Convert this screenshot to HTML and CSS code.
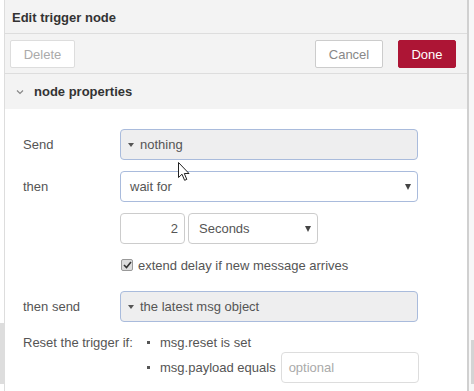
FILE: index.html
```html
<!DOCTYPE html>
<html lang="en">
<head>
    <meta charset="UTF-8">
    <title>Edit trigger node</title>
    <link rel="stylesheet" href="styles.css">
</head>
<body>
    <div class="frame">
        <div class="gutter gutter-left"><div class="thumb"></div></div>

        <div class="tray">
            <div class="tray-header">Edit trigger node</div>

            <div class="tray-toolbar">
                <button class="btn btn-delete" disabled>Delete</button>
                <span class="spacer"></span>
                <button class="btn btn-cancel">Cancel</button>
                <button class="btn btn-primary">Done</button>
            </div>

            <div class="section-head">
                <svg class="chevron" width="8" height="6" viewBox="0 0 8 6"><path d="M1 1.5 L4 4.5 L7 1.5" fill="none" stroke="#888" stroke-width="1.2"/></svg>
                <span>node properties</span>
            </div>

            <div class="form">
                <div class="row">
                    <label class="label">Send</label>
                    <div class="field typed">
                        <span class="caret-left"></span>
                        <span>nothing</span>
                    </div>
                </div>

                <div class="row">
                    <label class="label">then</label>
                    <div class="field select focus">
                        <span>wait for</span>
                        <span class="caret"></span>
                    </div>
                </div>

                <div class="row row-indent">
                    <div class="field number">2</div>
                    <div class="field select units">
                        <span>Seconds</span>
                        <span class="caret"></span>
                    </div>
                </div>

                <div class="check-row">
                    <span class="checkbox">
                        <svg width="9" height="8" viewBox="0 0 9 8"><path d="M1 4 L3.5 6.5 L8 1" fill="none" stroke="#333" stroke-width="1.6"/></svg>
                    </span>
                    <span>extend delay if new message arrives</span>
                </div>

                <div class="row">
                    <label class="label">then send</label>
                    <div class="field typed">
                        <span class="caret-left"></span>
                        <span>the latest msg object</span>
                    </div>
                </div>

                <div class="reset">
                    <div class="reset-label">Reset the trigger if:</div>
                    <ul class="reset-list">
                        <li class="reset-item">msg.reset is set</li>
                        <li class="reset-item reset-payload">
                            <span>msg.payload equals</span>
                            <span class="field optional">optional</span>
                        </li>
                    </ul>
                </div>
            </div>

            <svg class="cursor" width="13" height="20" viewBox="0 0 13 20">
                <path d="M0.5 0.5 L0.5 15.5 L4 12.2 L6.6 18.3 L8.8 17.4 L6.3 11.5 L11 11.5 Z" fill="#fff" stroke="#222" stroke-width="1"/>
            </svg>
        </div>

        <div class="gutter gutter-right"><div class="thumb"></div></div>
    </div>
</body>
</html>
```

FILE: styles.css
```css
body {
    margin: 0;
    font-family: "Liberation Sans", Arial, sans-serif;
    font-size: 13px;
    color: #555;
    background: #fff;
}
.frame {
    display: flex;
    height: 391px;
    overflow: hidden;
}
.gutter {
    display: flex;
    flex-direction: column;
}
.gutter-left {
    width: 4px;
    background: #fff;
    padding-top: 323px;
}
.gutter-left .thumb {
    width: 4px;
    height: 61px;
    background: #ddd;
}
.gutter-right {
    width: 5px;
    background: #f7f7f7;
    padding-top: 340px;
    align-items: flex-end;
}
.gutter-right .thumb {
    width: 3px;
    height: 44px;
    background: #d4d4d4;
}
.tray {
    position: relative;
    width: 462px;
    border-left: 1px solid #ddd;
    border-right: 2px solid #d0d0d0;
    background: #fff;
}
.tray-header {
    height: 33px;
    line-height: 35px;
    padding-left: 7px;
    background: #f3f3f3;
    border-bottom: 1px solid #ddd;
    font-weight: bold;
    color: #333;
}
.tray-toolbar {
    display: flex;
    align-items: flex-start;
    height: 33px;
    padding: 6px 11px 0 5px;
    background: #f3f3f3;
    border-bottom: 1px solid #ddd;
}
.spacer {
    flex: 1;
}
.btn {
    height: 28px;
    padding: 0;
    font-family: inherit;
    font-size: 13px;
    color: #888;
    background: #fff;
    border: 1px solid #ccc;
    border-radius: 2px;
}
.btn[disabled] {
    color: #aaa;
    border-color: #ddd;
}
.btn-delete {
    width: 65px;
}
.btn-cancel {
    width: 68px;
    margin-right: 15px;
}
.btn-primary {
    width: 58px;
    color: #fff;
    background: #ad1535;
    border-color: #ad1535;
}
.section-head {
    display: flex;
    align-items: center;
    height: 35px;
    padding-left: 11px;
    background: #f3f3f3;
    font-weight: bold;
    color: #333;
}
.chevron {
    margin-right: 10px;
}
.form {
    padding: 20px 0 0 18px;
}
.row {
    display: flex;
    align-items: center;
    margin-bottom: 11px;
}
.row-indent {
    padding-left: 97px;
}
.label {
    width: 97px;
    flex: none;
}
.field {
    box-sizing: border-box;
    display: flex;
    align-items: center;
    height: 31px;
    border: 1px solid #ccc;
    border-radius: 4px;
    background: #fff;
    color: #555;
}
.typed {
    width: 298px;
    padding-left: 7px;
    background: #eeeeef;
    border-color: #a9bbdc;
}
.caret-left {
    width: 0;
    height: 0;
    margin-right: 6px;
    border-left: 3.5px solid transparent;
    border-right: 3.5px solid transparent;
    border-top: 4px solid #555;
}
.select {
    justify-content: space-between;
    padding: 0 6px 0 9px;
}
.focus {
    width: 298px;
    border-color: #a9bbdc;
}
.caret {
    width: 0;
    height: 0;
    border-left: 3px solid transparent;
    border-right: 3px solid transparent;
    border-top: 6px solid #444;
}
.number {
    width: 65px;
    justify-content: flex-end;
    padding-right: 6px;
    margin-right: 3px;
}
.units {
    width: 130px;
    padding-left: 10px;
}
.check-row {
    display: flex;
    align-items: center;
    height: 20px;
    margin: 10px 0 16px 97px;
}
.checkbox {
    box-sizing: border-box;
    display: flex;
    align-items: center;
    justify-content: center;
    width: 12px;
    height: 12px;
    margin: 0 5px 0 1px;
    border: 1px solid #999;
    border-radius: 2px;
    background: #ddd;
}
.reset {
    display: flex;
    margin-top: 11px;
}
.reset-label {
    width: 119px;
    flex: none;
    line-height: 19px;
}
.reset-list {
    margin: 0;
    padding: 0;
    list-style: none;
}
.reset-item {
    position: relative;
    padding-left: 18px;
    line-height: 19px;
}
.reset-item::before {
    content: "";
    position: absolute;
    left: 5px;
    top: 8px;
    width: 3px;
    height: 3px;
    background: #555;
}
.reset-payload {
    display: flex;
    align-items: center;
    height: 31px;
}
.reset-payload::before {
    top: 14px;
}
.optional {
    width: 138px;
    margin-left: 5px;
    padding-left: 7px;
    color: #aaa;
    border-color: #ddd;
}
.cursor {
    position: absolute;
    left: 173px;
    top: 162px;
}
```
